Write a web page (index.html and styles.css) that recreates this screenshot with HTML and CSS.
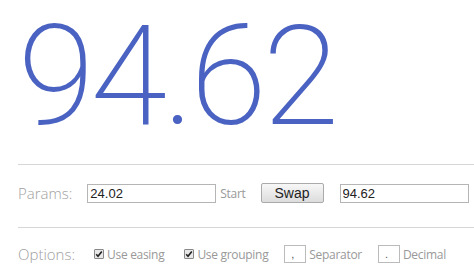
FILE: index.html
```html
<!DOCTYPE html>
<html>
  <head>
    <title>CountUp</title>
    <link rel="stylesheet" href="styles.css">
  </head>
  <body>
    <main class="demo">
      <h1 class="counter">94.62</h1>
      <hr>
      <form class="row params">
        <span class="row-label">Params:</span>
        <input type="text" class="num-field" value="24.02">
        <span class="hint">Start</span>
        <button type="button" class="swap">Swap</button>
        <input type="text" class="num-field" value="94.62">
      </form>
      <hr>
      <form class="row options">
        <span class="row-label">Options:</span>
        <label class="opt"><input type="checkbox" checked>Use easing</label>
        <label class="opt"><input type="checkbox" checked>Use grouping</label>
        <label class="opt"><input type="text" class="char-field" value=",">Separator</label>
        <label class="opt"><input type="text" class="char-field" value=".">Decimal</label>
      </form>
    </main>
  </body>
</html>
```

FILE: styles.css
```css
body {
  margin: 0;
  font-family: "Open Sans", sans-serif;
  background: #fff;
  overflow: hidden;
}

.demo {
  padding-left: 18px;
}

.counter {
  margin: 0;
  height: 164px;
  font-family: Roboto, sans-serif;
  font-weight: 200;
  font-size: 139px;
  line-height: 154px;
  letter-spacing: -4px;
  white-space: nowrap;
  color: #4a62c2;
}

hr {
  margin: 0;
  border: none;
  border-top: 1px solid #d6d6d6;
}

.row {
  display: flex;
  align-items: center;
  box-sizing: border-box;
  margin: 0;
  white-space: nowrap;
}

.row > * {
  flex-shrink: 0;
}

.params {
  height: 62px;
  padding-bottom: 6px;
}

.options {
  height: 52px;
}

.row-label {
  margin-right: 15px;
  font-weight: 300;
  font-size: 15px;
  color: #a0a0a0;
}

.num-field {
  box-sizing: border-box;
  width: 129px;
  height: 19px;
  margin: 0;
  padding: 0 2px;
  border: 1px solid #b5b5b5;
  font-family: "Liberation Sans", Arial, sans-serif;
  font-size: 13px;
  color: #222;
}

.hint {
  margin: 0 15px 0 4px;
  font-size: 12px;
  letter-spacing: -0.3px;
  color: #999;
}

.swap {
  box-sizing: border-box;
  width: 63px;
  height: 20px;
  margin: 0 16px 0 0;
  padding: 0;
  border: 1px solid #aaa;
  border-radius: 2px;
  background: linear-gradient(#f7f7f7, #dcdcdc);
  font-family: "Liberation Sans", Arial, sans-serif;
  font-size: 14px;
  color: #222;
}

.opt {
  display: flex;
  align-items: center;
  margin-right: 16px;
  font-size: 12px;
  letter-spacing: -0.3px;
  color: #999;
}

.opt input[type="checkbox"] {
  appearance: none;
  box-sizing: border-box;
  width: 10px;
  height: 10px;
  margin: 0 3px 0 4px;
  border: 1px solid #888;
  border-radius: 1px;
  background: #e8e8e8 url("data:image/svg+xml,%3Csvg xmlns='http://www.w3.org/2000/svg' viewBox='0 0 8 8'%3E%3Cpath d='M1.2 4.2 3 6.2 6.8 1.4' fill='none' stroke='%23222' stroke-width='1.6'/%3E%3C/svg%3E") center / 8px 8px no-repeat;
}

.char-field {
  box-sizing: border-box;
  width: 22px;
  height: 18px;
  margin: 0 3px 0 0;
  padding: 0 0 0 6px;
  border: 1px solid #bbb;
  font-size: 11px;
  color: #555;
}
```
